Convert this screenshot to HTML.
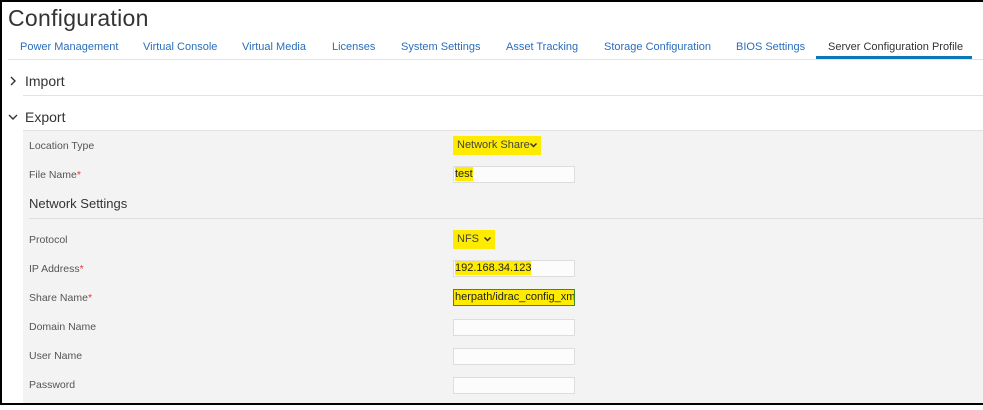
<!DOCTYPE html>
<html><head><style>
*{margin:0;padding:0;box-sizing:border-box}
body{width:983px;height:410px;background:#fff;font-family:"Liberation Sans",sans-serif;position:relative;overflow:hidden}
.frame{position:absolute;left:0;top:0;width:983px;height:405px;border-left:2px solid #000;border-top:2px solid #000;border-bottom:2px solid #000}
.abs{position:absolute;white-space:nowrap}
.title{left:8px;top:5px;font-size:23px;color:#333;letter-spacing:0.3px}
.tab{top:41px;font-size:11px;color:#2a6ebb}
.line{position:absolute;height:1px;background:#e2e2e2}
.sec{font-size:14px;color:#333}
.gray{position:absolute;left:23px;top:131px;width:960px;height:272px;background:#f3f3f3}
.lab{font-size:10.5px;color:#555;left:29px}
.req{color:#e33}
.inp{position:absolute;left:453px;width:122px;height:17px;background:#fcfcfc;border:1px solid #ddd;font-size:11px;color:#222;padding-left:1px;line-height:15px;white-space:nowrap}
.hl{background:#ffeb00}
.sel{position:absolute;left:453px;height:19px;background:#ffeb00;font-size:11px;color:#444;line-height:19px;padding:0 4px;white-space:nowrap}
.sel svg{position:absolute;right:4px;top:7px}
</style></head><body>
<div class="frame"></div>
<div class="abs title">Configuration</div>
<div class="abs tab" style="left:20px">Power Management</div>
<div class="abs tab" style="left:143px">Virtual Console</div>
<div class="abs tab" style="left:242px">Virtual Media</div>
<div class="abs tab" style="left:332px">Licenses</div>
<div class="abs tab" style="left:401px">System Settings</div>
<div class="abs tab" style="left:506px">Asset Tracking</div>
<div class="abs tab" style="left:604px">Storage Configuration</div>
<div class="abs tab" style="left:736px">BIOS Settings</div>
<div class="abs tab" style="left:828px;color:#333">Server Configuration Profile</div>
<div class="line" style="left:8px;top:59px;width:975px"></div>
<div style="position:absolute;left:816px;top:56px;width:156px;height:3px;background:#0a78b8"></div>
<svg class="abs" style="left:9px;top:76px" width="8" height="10"><path d="M2 1 L6 5 L2 9" fill="none" stroke="#333" stroke-width="1.4"/></svg>
<div class="abs sec" style="left:25px;top:73px">Import</div>
<div class="line" style="left:23px;top:95px;width:960px"></div>
<svg class="abs" style="left:8px;top:114px" width="10" height="7"><path d="M1 1 L5 5 L9 1" fill="none" stroke="#333" stroke-width="1.4"/></svg>
<div class="abs sec" style="left:25px;top:109px">Export</div>
<div class="line" style="left:23px;top:130px;width:960px"></div>
<div class="gray"></div>
<div class="abs lab" style="top:140px">Location Type</div>
<div class="abs lab" style="top:169px">File Name<span class="req">*</span></div>
<div class="abs" style="left:29px;top:196px;font-size:13px;color:#333">Network Settings</div>
<div class="line" style="left:29px;top:218px;width:954px;background:#ddd"></div>
<div class="abs lab" style="top:234px">Protocol</div>
<div class="abs lab" style="top:263px">IP Address<span class="req">*</span></div>
<div class="abs lab" style="top:292px">Share Name<span class="req">*</span></div>
<div class="abs lab" style="top:321px">Domain Name</div>
<div class="abs lab" style="top:350px">User Name</div>
<div class="abs lab" style="top:379px">Password</div>
<div class="sel" style="top:136px;width:88px">Network Share<svg width="7" height="5"><path d="M0.5 0.5 L3.5 3.5 L6.5 0.5" fill="none" stroke="#333" stroke-width="1.5"/></svg></div>
<div class="inp" style="top:166px"><span class="hl" style="padding:1px 0">test</span></div>
<div class="sel" style="top:230px;width:42px">NFS<svg width="7" height="5"><path d="M0.5 0.5 L3.5 3.5 L6.5 0.5" fill="none" stroke="#333" stroke-width="1.5"/></svg></div>
<div class="inp" style="top:260px"><span class="hl" style="padding:1px 0">192.168.34.123</span></div>
<div class="inp" style="top:289px;background:#ffeb00;border:1px solid #3a8a3a;overflow:hidden">herpath/idrac_config_xml</div>
<div class="inp" style="top:319px"></div>
<div class="inp" style="top:348px"></div>
<div class="inp" style="top:377px"></div>
</body></html>
